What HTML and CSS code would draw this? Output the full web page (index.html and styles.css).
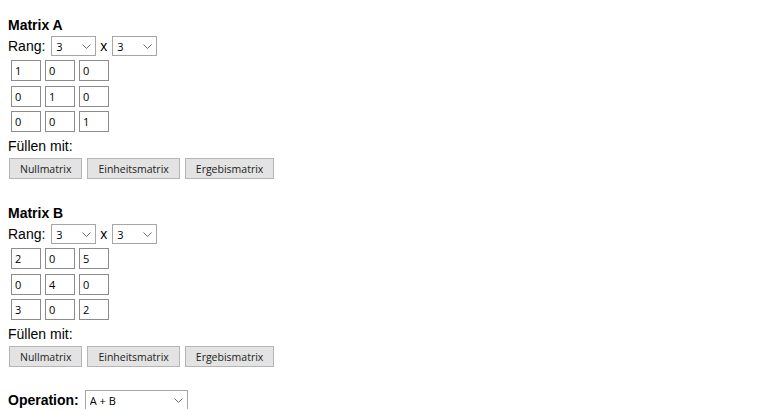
FILE: index.html
```html
<!DOCTYPE html>
<html lang="de">
<head>
    <meta charset="UTF-8">
    <meta name="viewport" content="width=device-width, initial-scale=1.0">
    <title>Matrizenrechner</title>
    <link rel="stylesheet" href="styles.css">
</head>
<body>
    <div class="matrix" id="matrixA">
        <div class="matrix-title">Matrix A</div>
        <div class="rang-row">
            <span>Rang:</span>
            <span class="select-wrap small">
                <select><option>1</option><option>2</option><option selected>3</option><option>4</option></select>
                <svg class="chevron" width="9" height="5" viewBox="0 0 9 5"><path d="M0.5 0.5 L4.5 4.5 L8.5 0.5" fill="none" stroke="#6b6b6b" stroke-width="1"/></svg>
            </span>
            <span class="times">x</span>
            <span class="select-wrap small">
                <select><option>1</option><option>2</option><option selected>3</option><option>4</option></select>
                <svg class="chevron" width="9" height="5" viewBox="0 0 9 5"><path d="M0.5 0.5 L4.5 4.5 L8.5 0.5" fill="none" stroke="#6b6b6b" stroke-width="1"/></svg>
            </span>
        </div>
        <div class="cells">
            <input type="text" value="1"><input type="text" value="0"><input type="text" value="0">
            <input type="text" value="0"><input type="text" value="1"><input type="text" value="0">
            <input type="text" value="0"><input type="text" value="0"><input type="text" value="1">
        </div>
        <div class="fill-label">Füllen mit:</div>
        <div class="fill-buttons">
            <button>Nullmatrix</button>
            <button>Einheitsmatrix</button>
            <button>Ergebismatrix</button>
        </div>
    </div>

    <div class="matrix" id="matrixB">
        <div class="matrix-title">Matrix B</div>
        <div class="rang-row">
            <span>Rang:</span>
            <span class="select-wrap small">
                <select><option>1</option><option>2</option><option selected>3</option><option>4</option></select>
                <svg class="chevron" width="9" height="5" viewBox="0 0 9 5"><path d="M0.5 0.5 L4.5 4.5 L8.5 0.5" fill="none" stroke="#6b6b6b" stroke-width="1"/></svg>
            </span>
            <span class="times">x</span>
            <span class="select-wrap small">
                <select><option>1</option><option>2</option><option selected>3</option><option>4</option></select>
                <svg class="chevron" width="9" height="5" viewBox="0 0 9 5"><path d="M0.5 0.5 L4.5 4.5 L8.5 0.5" fill="none" stroke="#6b6b6b" stroke-width="1"/></svg>
            </span>
        </div>
        <div class="cells">
            <input type="text" value="2"><input type="text" value="0"><input type="text" value="5">
            <input type="text" value="0"><input type="text" value="4"><input type="text" value="0">
            <input type="text" value="3"><input type="text" value="0"><input type="text" value="2">
        </div>
        <div class="fill-label">Füllen mit:</div>
        <div class="fill-buttons">
            <button>Nullmatrix</button>
            <button>Einheitsmatrix</button>
            <button>Ergebismatrix</button>
        </div>
    </div>

    <div class="operation-row">
        <span class="operation-label">Operation:</span>
        <span class="select-wrap wide">
            <select>
                <option selected>A + B</option>
                <option>A - B</option>
                <option>A * B</option>
            </select>
            <svg class="chevron" width="9" height="5" viewBox="0 0 9 5"><path d="M0.5 0.5 L4.5 4.5 L8.5 0.5" fill="none" stroke="#6b6b6b" stroke-width="1"/></svg>
        </span>
    </div>
</body>
</html>
```

FILE: styles.css
```css
body {
    margin: 0;
    padding: 17px 8px 0 8px;
    font-family: "Liberation Sans", Arial, sans-serif;
    font-size: 14px;
    line-height: 16px;
    color: #000;
    background-color: white;
}
.matrix {
    margin-bottom: 26px;
}
.matrix-title {
    font-weight: bold;
    height: 16px;
}
.rang-row {
    display: flex;
    align-items: center;
    height: 22px;
    margin-top: 2px;
}
.times {
    margin: 0 5px 0 4px;
}
.select-wrap {
    position: relative;
    display: inline-block;
    height: 20px;
}
.select-wrap.small {
    width: 45px;
    margin-left: 6px;
}
.times + .select-wrap.small {
    margin-left: 0;
}
.select-wrap.wide {
    width: 103px;
}
select {
    appearance: none;
    -webkit-appearance: none;
    width: 100%;
    height: 20px;
    margin: 0;
    padding: 0 0 0 4px;
    border: 1px solid #a6a6a6;
    border-radius: 0;
    background-color: white;
    font-family: "Open Sans", sans-serif;
    font-size: 11px;
    color: #000;
    box-sizing: border-box;
}
.chevron {
    position: absolute;
    right: 5px;
    top: 8px;
    pointer-events: none;
}
.cells {
    display: grid;
    grid-template-columns: repeat(3, 30px);
    grid-auto-rows: 21px;
    column-gap: 4px;
    row-gap: 4.5px;
    margin: 3px 0 0 3px;
}
.cells input {
    width: 30px;
    height: 21px;
    margin: 0;
    padding: 0 0 0 3px;
    border: 1px solid #8c8c8c;
    border-radius: 0;
    box-sizing: border-box;
    font-family: "Open Sans", sans-serif;
    font-size: 11px;
    color: #000;
}
.fill-label {
    margin-top: 6px;
    height: 16px;
}
.fill-buttons {
    display: flex;
    gap: 5px;
    margin: 4px 0 0 1px;
}
button {
    height: 21px;
    padding: 0 10px;
    border: 1px solid #b5b5b5;
    border-radius: 0;
    background-color: #e3e3e3;
    font-family: "Open Sans", sans-serif;
    font-size: 10.5px;
    color: #222;
    cursor: pointer;
}
button:hover {
    background-color: #e5f1fb;
}
.operation-row {
    display: flex;
    align-items: center;
    height: 22px;
    margin-top: -4px;
}
.operation-label {
    font-weight: bold;
    margin-right: 6px;
}
```
